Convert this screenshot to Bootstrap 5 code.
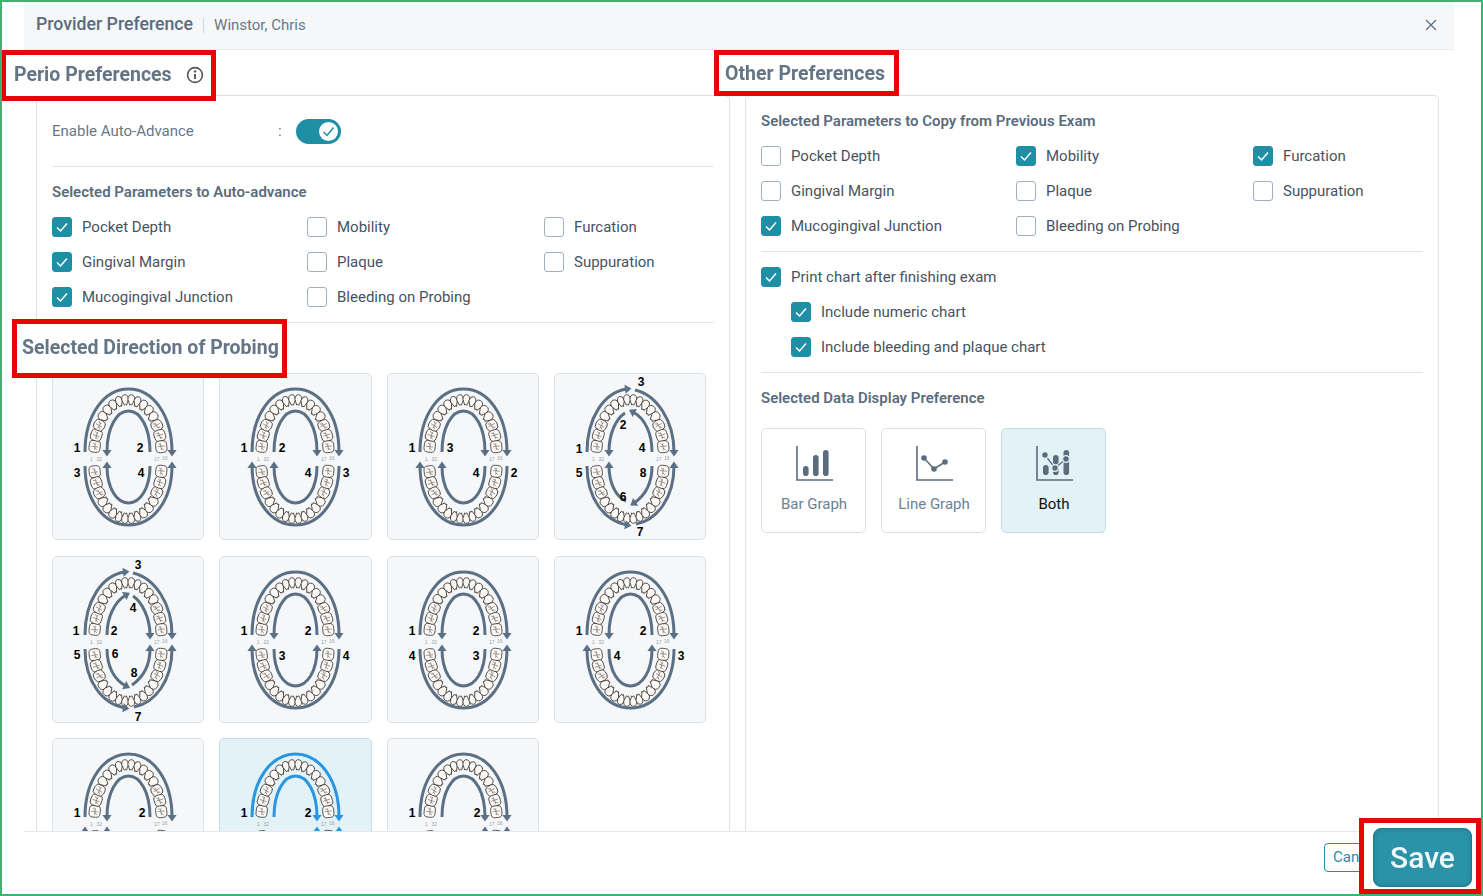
<!DOCTYPE html>
<html lang="en">
<head>
    <meta charset="UTF-8">
    <meta name="viewport" content="width=device-width, initial-scale=1.0">
    <title>Provider Preference</title>
    <link href="https://cdn.jsdelivr.net/npm/bootstrap@5.3.0/dist/css/bootstrap.min.css" rel="stylesheet">
    <style>
        html, body { height: 100%; }
        body {
            font-family: Roboto, "Liberation Sans", sans-serif;
            font-size: 15px;
            color: #46535f;
            background: #fff;
            overflow: hidden;
        }
        .page-frame {
            position: relative;
            width: 1483px;
            height: 896px;
            border: 2px solid #3cb371;
            overflow: hidden;
        }
        .pref-dialog { margin-left: 22px; width: 1430px; height: 892px; }
        .pref-head {
            height: 48px;
            background: #f5f7f9;
            border-bottom: 1px solid #e9edf0;
            padding: 0 17px 2px 12px;
            color: #5b6c7d;
        }
        .pref-title { font-size: 17.7px; font-weight: 500; margin: 0; }
        .pref-sep { width: 1px; height: 15px; background: #cdd6de; margin: 2px 10px 0; }
        .pref-who { font-size: 15px; margin-top: 2px; color: #687888; }
        .pref-body { height: 781px; overflow: hidden; padding: 45px 15px 0 12px; gap: 15px; }
        .pref-panel {
            flex: 0 0 694px;
            height: 900px;
            border: 1px solid #dbe2e9;
            border-radius: 5px 5px 0 0;
            padding: 0 15px;
        }
        .auto-row { padding-top: 23px; height: 70px; color: #67788a; }
        .auto-label { width: 226px; line-height: 25px; }
        .auto-colon { width: 18px; line-height: 25px; }
        .auto-switch {
            width: 45px;
            height: 25px;
            border-radius: 13px;
            background: #1f8fa6;
            padding: 3px;
        }
        .auto-knob {
            width: 19px;
            height: 19px;
            border-radius: 50%;
            background: #fff;
            margin-left: auto;
        }
        .pref-rule { height: 1px; background: #e1e6eb; }
        .pref-sub { font-size: 15px; font-weight: 600; line-height: 20px; color: #5b6c7d; margin: 0; }
        .sub-auto { margin: 15px 0 15px; }
        .sub-copy { margin: 15px 0 15px; }
        .sub-display { margin: 1px 0 20px; }
        .chk-grid { display: grid; row-gap: 15px; }
        .chk-left { grid-template-columns: 255px 237px 1fr; }
        .chk-right { grid-template-columns: 255px 237px 1fr; }
        .chk-item { display: flex; align-items: center; gap: 10px; height: 20px; line-height: 22px; white-space: nowrap; }
        .chk-item .form-check-input {
            width: 20px;
            height: 20px;
            margin: 0;
            flex: none;
            border: 1px solid #9fb0be;
            border-radius: 3px;
        }
        .chk-item .form-check-input:checked {
            background-color: #1f8fa6;
            border-color: #1f8fa6;
            background-size: 20px 20px;
            background-image: url("data:image/svg+xml,%3csvg xmlns='http://www.w3.org/2000/svg' viewBox='0 0 20 20'%3e%3cpath fill='none' stroke='%23fff' stroke-width='1.5' d='M5 10.5l3.5 3.5L15 6.5'/%3e%3c/svg%3e");
        }
        .rule-gap { margin: 15px 0; }
        .rule-end { margin-top: 15px; }
        .chk-sub { margin-left: 30px; }
        .probe-grid {
            display: grid;
            grid-template-columns: repeat(4, 152.3px);
            column-gap: 15px;
            row-gap: 15.5px;
            padding-top: 50px;
        }
        .probe-tile {
            height: 167px;
            background: #f5f7f9;
            border: 1px solid #d9e1e8;
            border-radius: 5px;
        }
        .probe-tile svg { display: block; margin: -1px; }
        .probe-tile.is-on { background: #e2f2f6; border-color: #bfdfe8; }
        .graph-row { display: flex; gap: 15px; }
        .graph-tile {
            width: 105px;
            height: 105px;
            border: 1px solid #d9e1e8;
            border-radius: 5px;
            color: #6f7f8e;
            padding-left: 1px;
        }
        .graph-tile svg { margin-left: 2px; }
        .graph-tile span { margin-top: 10px; }
        .graph-tile.is-on { background: #e2f2f6; border-color: #bfdfe8; color: #111; }
        .pref-foot { height: 63px; border-top: 1px solid #e4e8ec; padding: 11px 0 0 1300px; }
        .cancel-btn {
            width: 90px;
            height: 29px;
            padding: 0 0 0 8px;
            text-align: left;
            font-size: 15px;
            color: #1f8fa6;
            border: 1px solid #1f8fa6;
            border-radius: 4px;
            background: #fff;
        }
        .anno-box {
            position: absolute;
            background: #fff;
            border: 5px solid #e80505;
            display: flex;
            align-items: center;
            z-index: 5;
        }
        .anno-text {
            font-size: 19.5px;
            font-weight: 700;
            color: #647585;
            filter: blur(.5px);
            white-space: nowrap;
        }
        .info-mark { margin-left: 14px; }
        .anno-perio { left: -1px; top: 48px; width: 215px; height: 51px; padding: 0 0 2px 8px; }
        .anno-other { left: 712px; top: 48px; width: 185px; height: 46px; padding: 2px 0 0 6px; }
        .anno-direction { left: 10px; top: 317px; width: 275px; height: 59px; padding: 0 0 2px 5px; }
        .anno-save { left: 1357px; top: 816px; width: 122px; height: 76px; padding: 5px 4px 2px 9px; }
        .save-look {
            width: 99px;
            height: 59px;
            border: 1px solid #1f7c90;
            border-radius: 8px;
            background: #2a93a8;
            box-shadow: inset 0 0 4px #1f7c90;
            color: #eef8fa;
            font-size: 30px;
            font-weight: 500;
            filter: blur(.5px);
        }
    </style>
</head>
<body>
<svg width="0" height="0" class="position-absolute" id="sprite"></svg>
<div class="page-frame">
    <div class="pref-dialog">
        <div class="pref-head d-flex align-items-center">
            <h5 class="pref-title">Provider Preference</h5>
            <span class="pref-sep"></span>
            <span class="pref-who">Winstor, Chris</span>
            <svg class="ms-auto" width="12" height="12" viewBox="0 0 12 12"><path d="M1 1l10 10M11 1L1 11" stroke="#5b6c7d" stroke-width="1.2" fill="none"/></svg>
        </div>
        <div class="pref-body d-flex">
            <div class="pref-panel">
                <div class="auto-row d-flex">
                    <span class="auto-label">Enable Auto-Advance</span>
                    <span class="auto-colon">:</span>
                    <div class="auto-switch d-flex">
                        <div class="auto-knob d-flex align-items-center justify-content-center">
                            <svg width="13" height="11" viewBox="0 0 13 11"><path d="M1.5 6l3.5 3.5L11.5 1.5" stroke="#1f8fa6" stroke-width="1.5" fill="none"/></svg>
                        </div>
                    </div>
                </div>
                <div class="pref-rule"></div>
                <p class="pref-sub sub-auto">Selected Parameters to Auto-advance</p>
                <div class="chk-grid chk-left">
                    <label class="chk-item"><input class="form-check-input" type="checkbox" checked>Pocket Depth</label>
                    <label class="chk-item"><input class="form-check-input" type="checkbox">Mobility</label>
                    <label class="chk-item"><input class="form-check-input" type="checkbox">Furcation</label>
                    <label class="chk-item"><input class="form-check-input" type="checkbox" checked>Gingival Margin</label>
                    <label class="chk-item"><input class="form-check-input" type="checkbox">Plaque</label>
                    <label class="chk-item"><input class="form-check-input" type="checkbox">Suppuration</label>
                    <label class="chk-item"><input class="form-check-input" type="checkbox" checked>Mucogingival Junction</label>
                    <label class="chk-item"><input class="form-check-input" type="checkbox">Bleeding on Probing</label>
                </div>
                <div class="pref-rule rule-end"></div>
                <div class="probe-grid" id="probe-grid"></div>
            </div>
            <div class="pref-panel">
                <p class="pref-sub sub-copy">Selected Parameters to Copy from Previous Exam</p>
                <div class="chk-grid chk-right">
                    <label class="chk-item"><input class="form-check-input" type="checkbox">Pocket Depth</label>
                    <label class="chk-item"><input class="form-check-input" type="checkbox" checked>Mobility</label>
                    <label class="chk-item"><input class="form-check-input" type="checkbox" checked>Furcation</label>
                    <label class="chk-item"><input class="form-check-input" type="checkbox">Gingival Margin</label>
                    <label class="chk-item"><input class="form-check-input" type="checkbox">Plaque</label>
                    <label class="chk-item"><input class="form-check-input" type="checkbox">Suppuration</label>
                    <label class="chk-item"><input class="form-check-input" type="checkbox" checked>Mucogingival Junction</label>
                    <label class="chk-item"><input class="form-check-input" type="checkbox">Bleeding on Probing</label>
                </div>
                <div class="pref-rule rule-gap"></div>
                <div class="chk-grid">
                    <label class="chk-item"><input class="form-check-input" type="checkbox" checked>Print chart after finishing exam</label>
                    <label class="chk-item chk-sub"><input class="form-check-input" type="checkbox" checked>Include numeric chart</label>
                    <label class="chk-item chk-sub"><input class="form-check-input" type="checkbox" checked>Include bleeding and plaque chart</label>
                </div>
                <div class="pref-rule rule-gap"></div>
                <p class="pref-sub sub-display">Selected Data Display Preference</p>
                <div class="graph-row">
                    <div class="graph-tile d-flex flex-column align-items-center">
                        <svg class="mt-3" width="38" height="38" viewBox="0 0 38 38" fill="#5b6c7d">
                            <path d="M1 1v34h36" stroke="#5b6c7d" stroke-width="1.6" fill="none"/>
                            <rect x="7" y="21" width="5.6" height="10" rx="2.8"/><rect x="17" y="10" width="5.6" height="21" rx="2.8"/><rect x="27" y="5" width="5.6" height="26" rx="2.8"/>
                        </svg>
                        <span>Bar Graph</span>
                    </div>
                    <div class="graph-tile d-flex flex-column align-items-center">
                        <svg class="mt-3" width="38" height="38" viewBox="0 0 38 38" fill="#5b6c7d">
                            <path d="M1 1v34h36" stroke="#5b6c7d" stroke-width="1.6" fill="none"/>
                            <path d="M8 13l10 11 11-7" stroke="#5b6c7d" stroke-width="1.5" fill="none"/>
                            <circle cx="8" cy="13" r="2.8"/><circle cx="18" cy="24" r="2.8"/><circle cx="29" cy="17" r="2.8"/>
                        </svg>
                        <span>Line Graph</span>
                    </div>
                    <div class="graph-tile is-on d-flex flex-column align-items-center">
                        <svg class="mt-3" width="38" height="38" viewBox="0 0 38 38" fill="#5b6c7d">
                            <path d="M1 1v34h36" stroke="#5b6c7d" stroke-width="1.6" fill="none"/>
                            <rect x="7" y="20" width="5.6" height="10" rx="2.8"/><rect x="17" y="10" width="5.6" height="20" rx="2.8"/><rect x="27.5" y="5" width="5.6" height="25" rx="2.8"/>
                            <path d="M9 10l10 13 11-9" stroke="#e2f2f6" stroke-width="3.4" fill="none"/>
                            <path d="M9 10l10 13 11-9" stroke="#5b6c7d" stroke-width="1.3" fill="none"/>
                            <g stroke="#e2f2f6" stroke-width="1.2"><circle cx="9" cy="10" r="3.3"/><circle cx="19" cy="23" r="3.3"/><circle cx="30" cy="14" r="3.3"/></g>
                        </svg>
                        <span>Both</span>
                    </div>
                </div>
            </div>
        </div>
        <div class="pref-foot">
            <button class="cancel-btn" type="button">Cancel</button>
        </div>
    </div>

    <div class="anno-box anno-perio">
        <span class="anno-text">Perio Preferences</span>
        <svg class="info-mark" width="18" height="18" viewBox="0 0 18 18" fill="none">
            <circle cx="9" cy="9" r="7.4" stroke="#555" stroke-width="1.6"/>
            <path d="M9 8v5" stroke="#555" stroke-width="1.9"/><circle cx="9" cy="5.4" r="1.2" fill="#555"/>
        </svg>
    </div>
    <div class="anno-box anno-other"><span class="anno-text">Other Preferences</span></div>
    <div class="anno-box anno-direction"><span class="anno-text">Selected Direction of Probing</span></div>
    <div class="anno-box anno-save">
        <div class="save-look d-flex align-items-center justify-content-center">Save</div>
    </div>
</div>

<script src="https://cdn.jsdelivr.net/npm/bootstrap@5.3.0/dist/js/bootstrap.bundle.min.js"></script>
<script>
    // Teeth ring: 16 teeth per jaw laid along half an ellipse
    function jaw(cy, sign) {
        const sizes = [11, 10.5, 10, 8, 7.5, 7, 6, 6, 6, 6, 7, 7.5, 8, 10, 10.5, 11];
        const total = sizes.reduce((a, b) => a + b, 0);
        const steps = 400, a = 33.5, b = 52;
        const pts = [];
        let len = 0, px = 76 - a, py = cy;
        for (let i = 0; i <= steps; i++) {
            const t = Math.PI * i / steps;
            const x = 76 - a * Math.cos(t), y = cy - sign * b * Math.sin(t);
            len += Math.hypot(x - px, y - py);
            pts.push([x, y, len, t]);
            px = x; py = y;
        }
        const scale = len / total;
        let out = '', pos = 0;
        sizes.forEach((w, i) => {
            const at = (pos + w / 2) * scale;
            pos += w;
            const p = pts.find(q => q[2] >= at) || pts[steps];
            const deg = Math.atan2(-Math.sin(p[3]) * sign, -Math.cos(p[3])) * 180 / Math.PI + 90;
            const ww = w * scale + .5, d = 11;
            let shape;
            if (i >= 3 && i <= 12) {
                // front teeth: scalloped outside, pointed inside
                const hw = ww / 2;
                shape = `<path d="M${-hw} -.5Q${-hw} ${-d/2} 0 ${-d/2}Q${hw} ${-d/2} ${hw} -.5L${hw*.3} ${d/2-.5}L0 ${d/2-1.5}L${-hw*.3} ${d/2-.5}Z"/>`;
            } else {
                shape = `<rect x="${-ww/2}" y="${-d/2}" width="${ww}" height="${d}" rx="4"/>`;
                shape += `<path d="M-3.4 .3H3.4M-.4 -3.6V3.4M1.6 .3L3.4 -2.2M-1.7 .3L-3.4 2.6" fill="none" stroke="#6b635d" stroke-width=".6"/>`;
            }
            out += `<g transform="translate(${p[0].toFixed(1)} ${p[1].toFixed(1)}) rotate(${deg.toFixed(1)})">${shape}</g>`;
        });
        return out;
    }

    document.getElementById('sprite').innerHTML = `<symbol id="teeth" viewBox="0 0 152 167">
        <g fill="#fbf9f6" stroke="#2e2825" stroke-width=".75">${jaw(79, 1)}${jaw(93, -1)}</g>
    </symbol>`;

    function arch(xl, xr, yb, yt) {
        const cx = (xl + xr) / 2, w = (xr - xl) / 2, h = yt - yb;
        return `M${xl} ${yb}C${xl} ${yb + h * .6} ${cx - w * .55} ${yt} ${cx} ${yt}S${xr} ${yb + h * .6} ${xr} ${yb}`;
    }
    function head(x, y, dx, dy) {
        const bx = x - dx * 2, by = y - dy * 2;
        return `M${x + dx * 4.5} ${y + dy * 4.5}L${bx - dy * 4.6} ${by + dx * 4.6}L${bx + dy * 4.6} ${by - dx * 4.6}Z`;
    }

    // whole arches: r/l says which end carries the arrow
    function arches(spec, color) {
        const defs = [[33, 120, 79, 16, 1, spec[0]], [55, 98, 79, 38, 1, spec[1]], [33, 120, 93, 152, -1, spec[2]], [55, 98, 93, 130, -1, spec[3]]];
        let lines = '', heads = '';
        defs.forEach(([xl, xr, yb, yt, dir, end]) => {
            lines += arch(xl, xr, yb, yt);
            heads += head(end === 'r' ? xr : xl, yb, 0, dir);
        });
        return draw(lines, heads, color);
    }
    // split arches: each segment is a cubic with the arrow at its end
    function segments(list, color) {
        let lines = '', heads = '';
        list.forEach(s => {
            lines += `M${s[0]} ${s[1]}C${s[2]} ${s[3]} ${s[4]} ${s[5]} ${s[6]} ${s[7]}`;
            const l = Math.hypot(s[6] - s[4], s[7] - s[5]);
            heads += head(s[6], s[7], (s[6] - s[4]) / l, (s[7] - s[5]) / l);
        });
        return draw(lines, heads, color);
    }
    function draw(lines, heads, color) {
        return `<path d="${lines}" fill="none" stroke="${color}" stroke-width="3"/><path d="${heads}" fill="${color}"/>`;
    }

    const outer = [[33, 79, 33, 45, 50, 19, 73, 16], [81, 17, 103, 22, 120, 48, 120, 79], [33, 93, 33, 125, 50, 148, 73, 152], [82, 151, 103, 147, 120, 125, 120, 93]];
    const tiles = [
        { spec: 'rlrl', labels: [[25, 75, 1], [88, 75, 2], [25, 100, 3], [89, 100, 4]] },
        { spec: 'rrll', labels: [[25, 75, 1], [63, 75, 2], [127, 100, 3], [89, 100, 4]] },
        { spec: 'rrll', labels: [[25, 75, 1], [63, 75, 3], [127, 100, 2], [89, 100, 4]] },
        { segs: outer.concat([[71, 40, 62, 46, 55, 60, 55, 79], [98, 79, 98, 62, 92, 46, 79, 39], [72, 128, 62, 124, 55, 110, 55, 93], [98, 93, 98, 110, 92, 122, 80, 130]]),
          labels: [[25, 76, 1], [69, 52, 2], [87, 9, 3], [88, 75, 4], [25, 100, 5], [69, 124, 6], [86, 159, 7], [89, 100, 8]] },
        { segs: outer.concat([[55, 79, 55, 62, 62, 46, 74, 39], [81, 40, 90, 46, 98, 62, 98, 79], [55, 93, 55, 110, 62, 124, 74, 130], [80, 129, 90, 122, 98, 110, 98, 93]]),
          labels: [[24, 75, 1], [62, 75, 2], [86, 9, 3], [81, 52, 4], [25, 99, 5], [63, 98, 6], [86, 161, 7], [82, 117, 8]] },
        { spec: 'rllr', labels: [[25, 75, 1], [89, 75, 2], [63, 100, 3], [127, 100, 4]] },
        { spec: 'rlrl', labels: [[25, 75, 1], [89, 75, 2], [89, 100, 3], [25, 100, 4]] },
        { spec: 'rllr', labels: [[25, 75, 1], [89, 75, 2], [127, 100, 3], [63, 100, 4]] },
        { spec: 'rlll', labels: [[25, 75, 1], [90, 75, 2]] },
        { spec: 'rrrr', on: true, labels: [[25, 75, 1], [89, 75, 2]] },
        { spec: 'rrrr', labels: [[25, 75, 1], [90, 75, 2]] }
    ];

    document.getElementById('probe-grid').innerHTML = tiles.map(t => {
        const color = t.on ? '#2b95e0' : '#5b7085';
        const arrows = t.segs ? segments(t.segs, color) : arches(t.spec, color);
        const nums = t.labels.map(l => `<text x="${l[0]}" y="${l[1] + 4}" text-anchor="middle">${l[2]}</text>`).join('');
        return `<div class="probe-tile${t.on ? ' is-on' : ''}"><svg width="152" height="167" viewBox="0 0 152 167">
            <use href="#teeth"/>${arrows}
            <g font-family="'Liberation Sans',sans-serif" fill="#a3a3a3" font-size="5">
                <text x="38" y="87.5">1</text><text x="44.5" y="87.5">32</text><text x="102" y="87.5">17</text><text x="110" y="87">16</text>
            </g>
            <g font-family="'Liberation Sans',sans-serif" font-weight="700" font-size="12" fill="#000">${nums}</g>
        </svg></div>`;
    }).join('');
</script>
</body>
</html>
